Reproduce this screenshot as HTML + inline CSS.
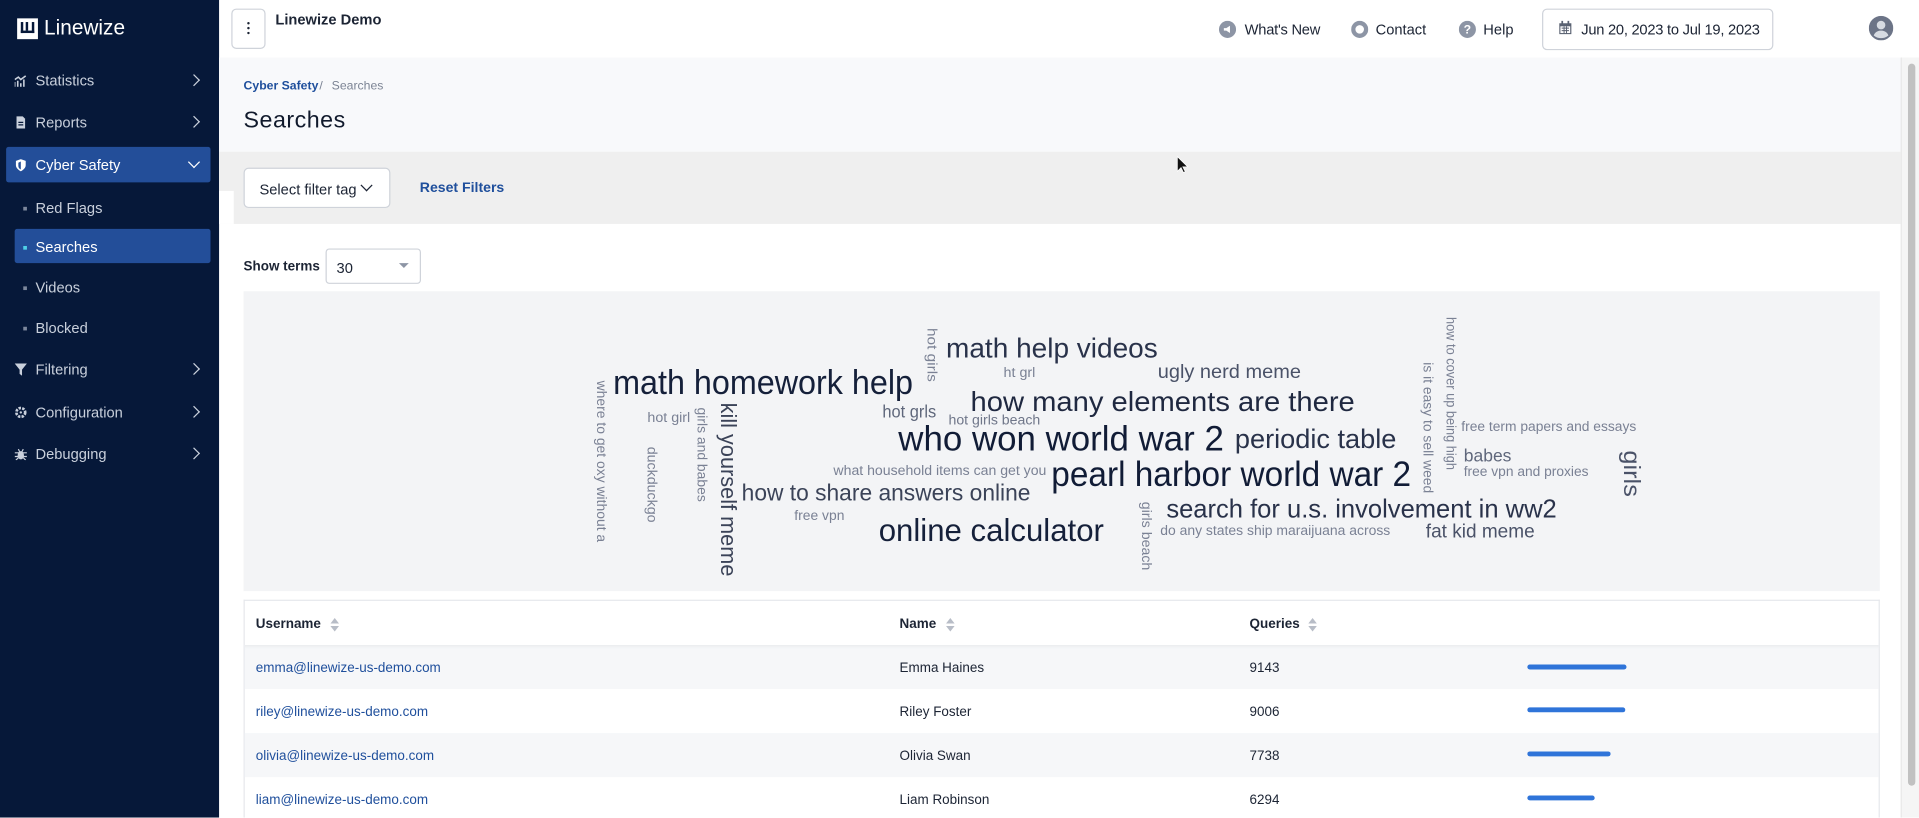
<!DOCTYPE html>
<html><head><meta charset="utf-8">
<style>
*{box-sizing:border-box;margin:0;padding:0}
html,body{width:1919px;height:818px;overflow:hidden;background:#fff;font-family:"Liberation Sans",sans-serif}
#w{position:absolute;left:0;top:0;width:1568px;height:668px;transform:scale(1.22385);transform-origin:0 0;background:#fff}
.a{position:absolute}
.sb{left:0;top:0;width:179px;height:668px;background:#061839}
.ni{position:absolute;left:0;width:179px;color:#c9d0dc;font-size:12px;line-height:14px}
.ni .t{position:absolute;left:29px}
.ni .ic{position:absolute;left:12px;top:2px;width:10px;height:10px}
.chev{position:absolute;left:155px;top:3px;width:7px;height:7px;border-right:1.6px solid #c9d0dc;border-bottom:1.6px solid #c9d0dc;transform:rotate(-45deg)}
.dot{position:absolute;left:19px;top:6px;width:3px;height:3px;background:#7c879c}
.hdr{font-size:12px;color:#1c2434}
</style></head><body><div id="w">
<div class="a sb">
  <div class="a" style="left:14px;top:15px;width:17px;height:17px;background:#fff"></div>
  <div class="a" style="left:17px;top:18px;width:11px;height:9px;border:2px solid #061839;border-top:none"></div>
  <div class="a" style="left:21px;top:18px;width:2px;height:7px;background:#061839"></div>
  <div class="a" style="left:36px;top:13px;color:#fff;font-size:17px">Linewize</div>

  <div class="ni" style="top:59px"><svg class="ic" viewBox="0 0 10 10"><path d="M0 10V6M2.5 10V5M5 10V7M7.5 10V4M0 4L3 2 5 4 9 1" stroke="#c9d0dc" stroke-width="1.3" fill="none"/></svg><span class="t">Statistics</span><span class="chev"></span></div>
  <div class="ni" style="top:93px"><svg class="ic" viewBox="0 0 10 10"><path d="M1.5 0h5l2 2v8h-7z" fill="#c9d0dc"/><path d="M3 5h4M3 7h4" stroke="#061839"/></svg><span class="t">Reports</span><span class="chev"></span></div>
  <div class="a" style="left:5px;top:120px;width:167px;height:29px;background:#234e99;border-radius:2px"></div>
  <div class="ni" style="top:128px;color:#fff"><svg class="ic" viewBox="0 0 10 10"><path d="M5 0L9 1.5V5C9 8 5 10 5 10S1 8 1 5V1.5z" fill="#fff"/><path d="M5 2v6.5C3 7.5 3 6 3 5V3z" fill="#234e99"/></svg><span class="t">Cyber Safety</span><span class="chev" style="transform:rotate(45deg);top:1px;border-color:#fff"></span></div>
  <div class="ni" style="top:163px"><span class="dot"></span><span class="t">Red Flags</span></div>
  <div class="a" style="left:12px;top:187px;width:160px;height:28px;background:#234e99;border-radius:2px"></div>
  <div class="ni" style="top:195px;color:#fff"><span class="dot" style="background:#4fd1e8"></span><span class="t">Searches</span></div>
  <div class="ni" style="top:228px"><span class="dot"></span><span class="t">Videos</span></div>
  <div class="ni" style="top:261px"><span class="dot"></span><span class="t">Blocked</span></div>
  <div class="ni" style="top:295px"><svg class="ic" viewBox="0 0 10 10"><path d="M0 0h10L6 5v5L4 8.5V5z" fill="#c9d0dc"/></svg><span class="t">Filtering</span><span class="chev"></span></div>
  <div class="ni" style="top:330px"><svg class="ic" viewBox="0 0 10 10"><circle cx="5" cy="5" r="3.6" fill="none" stroke="#c9d0dc" stroke-width="2.2" stroke-dasharray="2 1"/><circle cx="5" cy="5" r="1" fill="#c9d0dc"/></svg><span class="t">Configuration</span><span class="chev"></span></div>
  <div class="ni" style="top:364px"><svg class="ic" viewBox="0 0 10 10"><ellipse cx="5" cy="6" rx="2.6" ry="3.4" fill="#c9d0dc"/><path d="M0 4h10M0 7h10M1 10l2-2M9 10l-2-2M3 1l1 2M7 1l-1 2" stroke="#c9d0dc"/></svg><span class="t">Debugging</span><span class="chev"></span></div>
</div>

<div class="a" style="left:189px;top:7px;width:28px;height:33px;border:1px solid #cfd3da;border-radius:4px"></div>
<div class="a" style="left:202px;top:18px;width:2.4px;height:2.4px;background:#1c2434;border-radius:50%;box-shadow:0 4px 0 #1c2434,0 8px 0 #1c2434"></div>
<div class="a" style="left:225px;top:9px;font-size:12px;font-weight:bold;color:#1c2434">Linewize Demo</div>

<svg class="a" style="left:996px;top:17px" width="14" height="14" viewBox="0 0 14 14"><circle cx="7" cy="7" r="7" fill="#8d95a5"/><path d="M4 6h2l3-2v6L6 8H4z" fill="#fff"/></svg>
<div class="a hdr" style="left:1017px;top:17px;letter-spacing:-.2px">What's New</div>
<svg class="a" style="left:1104px;top:17px" width="14" height="14" viewBox="0 0 14 14"><circle cx="7" cy="7" r="7" fill="#8d95a5"/><circle cx="7" cy="7" r="3.5" fill="#fff"/></svg>
<div class="a hdr" style="left:1124px;top:17px">Contact</div>
<svg class="a" style="left:1192px;top:17px" width="14" height="14" viewBox="0 0 14 14"><circle cx="7" cy="7" r="7" fill="#8d95a5"/><text x="7" y="10.5" font-size="10" font-weight="bold" fill="#fff" text-anchor="middle" font-family="Liberation Sans">?</text></svg>
<div class="a hdr" style="left:1212px;top:17px">Help</div>
<div class="a" style="left:1260px;top:7px;width:189px;height:34px;border:1px solid #cfd3da;border-radius:4px"></div>
<svg class="a" style="left:1274px;top:17px" width="10" height="11" viewBox="0 0 10 11"><rect x="0" y="2" width="10" height="9" fill="#5a6272"/><rect x="1" y="4.5" width="8" height="5.5" fill="#fff"/><path d="M2.5 0v3M7.5 0v3" stroke="#5a6272" stroke-width="1.4"/><path d="M2 6h6M2 8h6M4 4.5v6M6 4.5v6" stroke="#5a6272" stroke-width=".8"/></svg>
<div class="a hdr" style="left:1292px;top:17px;letter-spacing:-.2px">Jun 20, 2023 to Jul 19, 2023</div>
<svg class="a" style="left:1527px;top:13px" width="20" height="20" viewBox="0 0 20 20"><circle cx="10" cy="10" r="10" fill="#6c7487"/><circle cx="10" cy="7.5" r="3.5" fill="#d7dbe2"/><path d="M4 16c1-3 3.5-4 6-4s5 1 6 4c-2 1.6-4 2.2-6 2.2S6 17.6 4 16z" fill="#d7dbe2"/></svg>

<div class="a" style="left:179px;top:47px;width:1374px;height:77px;background:#f8f9fb"></div>
<div class="a" style="left:199px;top:65px;font-size:10px;color:#1f4f9c;font-weight:bold">Cyber Safety</div>
<div class="a" style="left:261px;top:65px;font-size:10px;color:#7c8494">/</div>
<div class="a" style="left:271px;top:65px;font-size:10px;color:#7c8494">Searches</div>
<div class="a" style="left:199px;top:88px;font-size:19px;color:#111a2c;font-weight:500;letter-spacing:.4px">Searches</div>

<div class="a" style="left:179px;top:124px;width:1374px;height:59px;background:#efefef"></div>
<div class="a" style="left:179px;top:156px;width:12px;height:27px;background:#fff"></div>
<div class="a" style="left:199px;top:137px;width:120px;height:33px;background:#fff;border:1px solid #cfd3da;border-radius:4px"></div>
<div class="a" style="left:212px;top:148px;font-size:12px;color:#1c2434">Select filter tag</div>
<div class="a" style="left:296px;top:148px;width:7px;height:7px;border-right:1.6px solid #1c2434;border-bottom:1.6px solid #1c2434;transform:rotate(45deg)"></div>
<div class="a" style="left:343px;top:148px;font-size:11.5px;color:#1f4f9c;font-weight:bold">Reset Filters</div>

<div class="a" style="left:199px;top:212px;font-size:11px;color:#1c2434;font-weight:bold">Show terms</div>
<div class="a" style="left:266px;top:203px;width:78px;height:29px;border:1px solid #cfd3da;border-radius:3px"></div>
<div class="a" style="left:275px;top:212px;font-size:12px;color:#1c2434">30</div>
<div class="a" style="left:326px;top:215px;width:0;height:0;border-left:4px solid transparent;border-right:4px solid transparent;border-top:4px solid #8d95a5"></div>

<div class="a" style="left:199px;top:238px;width:1337px;height:245px;background:#f3f4f6"></div>
<svg class="a" style="left:0;top:0" width="1568" height="668" font-family="Liberation Sans, sans-serif">
<text x="501" y="322" font-size="28" fill="#15203a" textLength="245" lengthAdjust="spacingAndGlyphs">math homework help</text>
<text x="773" y="292" font-size="23" fill="#29324a" textLength="173" lengthAdjust="spacingAndGlyphs">math help videos</text>
<text x="946" y="309" font-size="16" fill="#4a5268" textLength="117" lengthAdjust="spacingAndGlyphs">ugly nerd meme</text>
<text x="820" y="308" font-size="11" fill="#7a8194" textLength="26" lengthAdjust="spacingAndGlyphs">ht grl</text>
<text x="793" y="336" font-size="23" fill="#1f2840" textLength="314" lengthAdjust="spacingAndGlyphs">how many elements are there</text>
<text x="721" y="341" font-size="14" fill="#5f677b" textLength="44" lengthAdjust="spacingAndGlyphs">hot grls</text>
<text x="775" y="347" font-size="11" fill="#6f7689" textLength="75" lengthAdjust="spacingAndGlyphs">hot girls beach</text>
<text x="529" y="345" font-size="11" fill="#7a8194" textLength="35" lengthAdjust="spacingAndGlyphs">hot girl</text>
<text x="734" y="368" font-size="29" fill="#111c36" textLength="266" lengthAdjust="spacingAndGlyphs">who won world war 2</text>
<text x="1009" y="366" font-size="22" fill="#29324a" textLength="132" lengthAdjust="spacingAndGlyphs">periodic table</text>
<text x="1194" y="352" font-size="11" fill="#7a8194" textLength="143" lengthAdjust="spacingAndGlyphs">free term papers and essays</text>
<text x="1196" y="377" font-size="14" fill="#5f677b" textLength="39" lengthAdjust="spacingAndGlyphs">babes</text>
<text x="1196" y="389" font-size="11" fill="#7a8194" textLength="102" lengthAdjust="spacingAndGlyphs">free vpn and proxies</text>
<text x="681" y="388" font-size="11" fill="#7a8194" textLength="174" lengthAdjust="spacingAndGlyphs">what household items can get you</text>
<text x="859" y="397" font-size="29" fill="#111c36" textLength="294" lengthAdjust="spacingAndGlyphs">pearl harbor world war 2</text>
<text x="606" y="409" font-size="19" fill="#3b4358" textLength="236" lengthAdjust="spacingAndGlyphs">how to share answers online</text>
<text x="649" y="425" font-size="11" fill="#7a8194" textLength="41" lengthAdjust="spacingAndGlyphs">free vpn</text>
<text x="953" y="423" font-size="21" fill="#29324a" textLength="319" lengthAdjust="spacingAndGlyphs">search for u.s. involvement in ww2</text>
<text x="718" y="442" font-size="26" fill="#15203a" textLength="184" lengthAdjust="spacingAndGlyphs">online calculator</text>
<text x="948" y="437" font-size="11" fill="#7a8194" textLength="188" lengthAdjust="spacingAndGlyphs">do any states ship maraijuana across</text>
<text x="1165" y="439" font-size="16" fill="#4a5268" textLength="89" lengthAdjust="spacingAndGlyphs">fat kid meme</text>
<text transform="translate(488 311) rotate(90)" font-size="11" fill="#7a8194" textLength="132" lengthAdjust="spacingAndGlyphs">where to get oxy without a</text>
<text transform="translate(529 365) rotate(90)" font-size="11" fill="#7a8194" textLength="62" lengthAdjust="spacingAndGlyphs">duckduckgo</text>
<text transform="translate(570 333) rotate(90)" font-size="11" fill="#7a8194" textLength="77" lengthAdjust="spacingAndGlyphs">girls and babes</text>
<text transform="translate(589 329) rotate(90)" font-size="18" fill="#3b4358" textLength="142" lengthAdjust="spacingAndGlyphs">kill yourself meme</text>
<text transform="translate(758 268) rotate(90)" font-size="11" fill="#7a8194" textLength="44" lengthAdjust="spacingAndGlyphs">hot girls</text>
<text transform="translate(933 410) rotate(90)" font-size="11" fill="#7a8194" textLength="56" lengthAdjust="spacingAndGlyphs">girls beach</text>
<text transform="translate(1182 259) rotate(90)" font-size="11" fill="#7a8194" textLength="125" lengthAdjust="spacingAndGlyphs">how to cover up being high</text>
<text transform="translate(1163 296) rotate(90)" font-size="11" fill="#7a8194" textLength="107" lengthAdjust="spacingAndGlyphs">is it easy to sell weed</text>
<text transform="translate(1327 368) rotate(90)" font-size="19" fill="#4a5268" textLength="38" lengthAdjust="spacingAndGlyphs">girls</text>
<path d="M962 128v12l3-3 2 4 1.5-.7-2-4h4z" fill="#111" stroke="#fff" stroke-width=".6"/>
</svg>

<div class="a" style="left:199px;top:490px;width:1337px;height:178px;border:1px solid #e6e8ec;border-bottom:none;background:#fff"></div>
<div class="a" style="left:200px;top:527px;width:1335px;height:36px;background:#f6f7f9;box-shadow:inset 0 3px 3px -2px rgba(0,0,0,.06)"></div>
<div class="a" style="left:200px;top:599px;width:1335px;height:36px;background:#f6f7f9"></div>
<div class="a" style="left:209px;top:504px;font-size:11px;font-weight:bold;color:#1c2434">Username</div>
<div class="a" style="left:735px;top:504px;font-size:11px;font-weight:bold;color:#1c2434">Name</div>
<div class="a" style="left:1021px;top:504px;font-size:11px;font-weight:bold;color:#1c2434">Queries</div>
<svg class="a" style="left:270px;top:505px" width="7" height="11"><path d="M0 4.5L3.5 0 7 4.5zM0 6.5L3.5 11 7 6.5z" fill="#b8bdc7"/></svg>
<svg class="a" style="left:773px;top:505px" width="7" height="11"><path d="M0 4.5L3.5 0 7 4.5zM0 6.5L3.5 11 7 6.5z" fill="#b8bdc7"/></svg>
<svg class="a" style="left:1069px;top:505px" width="7" height="11"><path d="M0 4.5L3.5 0 7 4.5zM0 6.5L3.5 11 7 6.5z" fill="#b8bdc7"/></svg>

<div class="a" style="left:209px;top:540px;font-size:11px;color:#1f4f9c">emma@linewize-us-demo.com</div>
<div class="a" style="left:735px;top:540px;font-size:11px;color:#1c2434">Emma Haines</div>
<div class="a" style="left:1021px;top:540px;font-size:11px;color:#1c2434">9143</div>
<div class="a" style="left:1248px;top:543px;width:81px;height:4px;border-radius:2px;background:#2f74d9"></div>

<div class="a" style="left:209px;top:576px;font-size:11px;color:#1f4f9c">riley@linewize-us-demo.com</div>
<div class="a" style="left:735px;top:576px;font-size:11px;color:#1c2434">Riley Foster</div>
<div class="a" style="left:1021px;top:576px;font-size:11px;color:#1c2434">9006</div>
<div class="a" style="left:1248px;top:578px;width:80px;height:4px;border-radius:2px;background:#2f74d9"></div>

<div class="a" style="left:209px;top:612px;font-size:11px;color:#1f4f9c">olivia@linewize-us-demo.com</div>
<div class="a" style="left:735px;top:612px;font-size:11px;color:#1c2434">Olivia Swan</div>
<div class="a" style="left:1021px;top:612px;font-size:11px;color:#1c2434">7738</div>
<div class="a" style="left:1248px;top:614px;width:68px;height:4px;border-radius:2px;background:#2f74d9"></div>

<div class="a" style="left:209px;top:648px;font-size:11px;color:#1f4f9c">liam@linewize-us-demo.com</div>
<div class="a" style="left:735px;top:648px;font-size:11px;color:#1c2434">Liam Robinson</div>
<div class="a" style="left:1021px;top:648px;font-size:11px;color:#1c2434">6294</div>
<div class="a" style="left:1248px;top:650px;width:55px;height:4px;border-radius:2px;background:#2f74d9"></div>

<div class="a" style="left:1553px;top:47px;width:15px;height:621px;background:#f5f5f5;border-left:1px solid #e8e8e8"></div>
<div class="a" style="left:1559px;top:52px;width:6px;height:590px;background:#c1c1c1;border-radius:3px"></div>
</div></body></html>
